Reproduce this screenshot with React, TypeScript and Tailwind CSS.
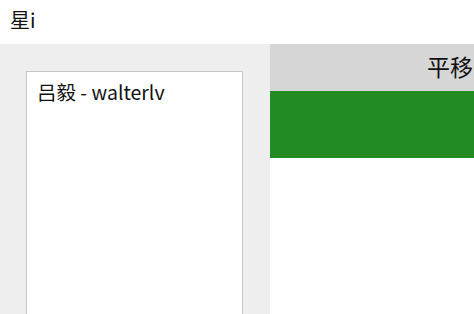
import React from 'react';

const font = { fontFamily: '"Noto Sans CJK SC", "Noto Sans", sans-serif' };

export default function App() {
  return (
    <div className="w-[474px] h-[314px] overflow-hidden bg-white text-[#111]" style={font}>
      <div className="h-[44px] pl-[10px] pt-[6px] text-[20px] leading-[28px]">星i</div>
      <div className="flex h-[270px]">
        <div className="w-[270px] shrink-0 bg-[#eeeeee] pl-[26px] pt-[27px] pr-[27px]">
          <div className="h-full bg-white border border-[#c6c6c6] border-b-0 px-[10px] pt-[7px] text-[19.5px] leading-[26px]">
            吕毅 - walterlv
          </div>
        </div>
        <div className="flex-1 flex flex-col overflow-hidden">
          <div className="h-[47px] bg-[#d6d6d6] pl-[157px] pt-[7px] text-[23px] leading-[30px] whitespace-nowrap">
            平移
          </div>
          <div className="h-[67px] bg-[#228b22]" />
        </div>
      </div>
    </div>
  );
}
